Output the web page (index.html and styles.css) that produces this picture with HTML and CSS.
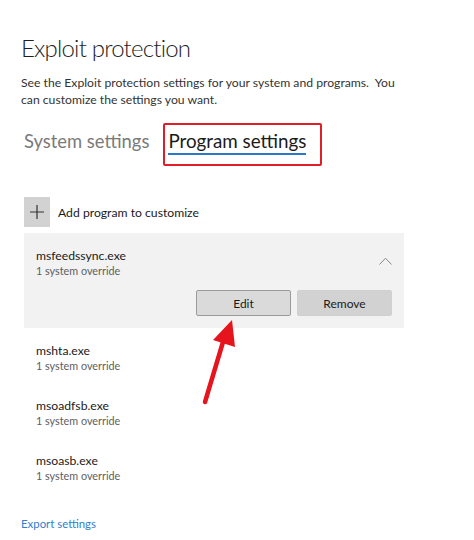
FILE: index.html
```html
<!DOCTYPE html>
<html>
<head>
<meta charset="utf-8">
<link rel="stylesheet" href="styles.css">
</head>
<body>
<div class="page">
  <h1 class="title">Exploit protection</h1>
  <p class="desc">See the Exploit protection settings for your system and programs.&nbsp; You can customize the settings you want.</p>
  <div class="tabs">
    <span class="tab">System settings</span>
    <span class="tab-box"><span class="tab active">Program settings</span></span>
  </div>
  <div class="add">
    <span class="add-icon">
      <svg width="14" height="14" viewBox="0 0 14 14"><path d="M7 0V14M0 7H14" stroke="#333" stroke-width="1.2" fill="none"/></svg>
    </span>
    <span class="add-label">Add program to customize</span>
  </div>
  <div class="list">
    <div class="item expanded">
      <div class="item-head">
        <div>
          <div class="name">msfeedssync.exe</div>
          <div class="sub">1 system override</div>
        </div>
        <svg class="chev" width="13" height="8" viewBox="0 0 13 8"><path d="M0.5 7.5L6.5 1.2L12.5 7.5" stroke="#888" stroke-width="1" fill="none"/></svg>
      </div>
      <div class="actions">
        <button class="btn edit">Edit</button>
        <button class="btn">Remove</button>
      </div>
    </div>
    <div class="item">
      <div class="name">mshta.exe</div>
      <div class="sub">1 system override</div>
    </div>
    <div class="item">
      <div class="name">msoadfsb.exe</div>
      <div class="sub">1 system override</div>
    </div>
    <div class="item">
      <div class="name">msoasb.exe</div>
      <div class="sub">1 system override</div>
    </div>
  </div>
  <a class="export">Export settings</a>
  <svg class="arrow" width="60" height="100" viewBox="0 0 60 100">
    <line x1="15" y1="90" x2="33" y2="30" stroke="#e5141d" stroke-width="4.5" stroke-linecap="round"/>
    <polygon points="42,8 23,28 45,35" fill="#e5141d"/>
  </svg>
</div>
</body>
</html>
```
FILE: styles.css
```css
* { box-sizing: border-box; }
html, body { margin: 0; padding: 0; background: #fff; }
body { font-family: "Lato", "Open Sans", sans-serif; color: #1a1a1a; }
.page { position: relative; width: 474px; height: 540px; padding: 32px 0 0 21px; overflow: hidden; }
.title { margin: 0; font-size: 24px; font-weight: 300; line-height: 32px; color: #1e1e1e; letter-spacing: -0.8px; }
.desc { margin: 10px 0 0 0; width: 375px; font-size: 12.2px; line-height: 17px; color: #333; }
.tabs { display: flex; align-items: flex-start; margin-top: 17px; height: 43px; }
.tab { font-size: 18.4px; font-weight: 400; color: #7a7a7a; line-height: 24px; padding-top: 4px; margin-left: 3px; }
.tab-box { margin-left: 14px; border: 2.5px solid #e01e2a; border-radius: 2px; height: 43px; padding: 0 14px 0 3px; margin-top: -2px; }
.tab.active { display: inline-block; font-size: 18.8px; color: #1b1b1b; border-bottom: 2px solid #2a78c8; padding-top: 4px; padding-bottom: 0; margin-left: 0; }
.add { display: flex; align-items: center; margin-top: 29px; margin-left: 3px; }
.add-icon { width: 26px; height: 30px; background: #d2d2d2; display: flex; align-items: center; justify-content: center; }
.add-label { margin-left: 8px; font-size: 12.2px; color: #1a1a1a; }
.list { margin-top: 6px; margin-left: 3px; }
.item { width: 380px; height: 55px; padding: 15px 0 0 12px; }
.item.expanded { height: 95px; background: #f2f2f2; padding-right: 12px; }
.item-head { display: flex; justify-content: space-between; align-items: flex-start; }
.chev { margin-top: 9px; margin-right: 0; }
.name { font-size: 12.2px; line-height: 16px; color: #1a1a1a; }
.sub { font-size: 10.8px; line-height: 14px; color: #5e5e5e; }
.actions { display: flex; justify-content: flex-end; gap: 6px; margin-top: 12px; }
.btn { width: 95px; height: 26px; border: 1px solid #d0d0d0; background: #d2d2d2; font-family: "Lato", sans-serif; font-size: 12px; color: #1a1a1a; padding: 0; border-radius: 2px; }
.btn.edit { border-color: #9a9a9a; background: #dadada; }
.export { display: block; margin-top: 24px; font-size: 11.4px; color: #2f7fcd; }
.arrow { position: absolute; left: 190px; top: 312px; }
```
